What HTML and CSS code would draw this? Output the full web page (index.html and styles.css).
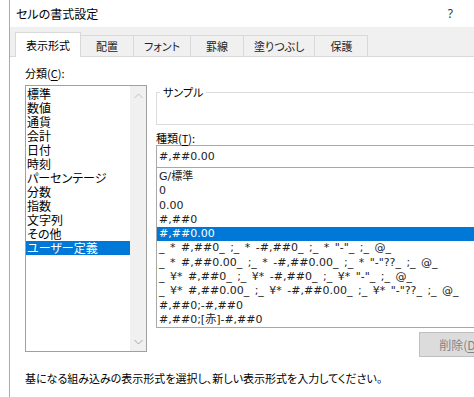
FILE: index.html
```html
<!DOCTYPE html>
<html lang="ja">
<head>
    <meta charset="UTF-8">
    <meta name="viewport" content="width=device-width, initial-scale=1.0">
    <title>セルの書式設定</title>
    <link rel="stylesheet" href="styles.css">
</head>
<body>
    <div class="window">
        <div class="titlebar">
            <span class="title">セルの書式設定</span>
            <span class="help">?</span>
        </div>

        <div class="tabs">
            <div class="tab active">表示形式</div>
            <div class="tab">配置</div>
            <div class="tab">フォント</div>
            <div class="tab">罫線</div>
            <div class="tab">塗りつぶし</div>
            <div class="tab">保護</div>
        </div>

        <div class="panel">
            <div class="columns">
                <div class="left">
                    <div class="label">分類(<u>C</u>):</div>
                    <div class="category-list">
                        <ul class="items">
                            <li>標準</li>
                            <li>数値</li>
                            <li>通貨</li>
                            <li>会計</li>
                            <li>日付</li>
                            <li>時刻</li>
                            <li>パーセンテージ</li>
                            <li>分数</li>
                            <li>指数</li>
                            <li>文字列</li>
                            <li>その他</li>
                            <li class="selected">ユーザー定義</li>
                        </ul>
                        <div class="scrollbar">
                            <svg class="arrow up" width="9" height="6" viewBox="0 0 9 6"><polyline points="0.5,5 4.5,1 8.5,5" fill="none" stroke="#c2c2c2" stroke-width="1"/></svg>
                            <svg class="arrow down" width="9" height="6" viewBox="0 0 9 6"><polyline points="0.5,1 4.5,5 8.5,1" fill="none" stroke="#a6a6a6" stroke-width="1"/></svg>
                        </div>
                    </div>
                </div>

                <div class="right">
                    <fieldset class="sample">
                        <legend>サンプル</legend>
                        <div class="sample-body"></div>
                    </fieldset>
                    <div class="label type-label">種類(<u>T</u>):</div>
                    <div class="type-input">#,##0.00</div>
                    <ul class="format-list">
                        <li>G/標準</li>
                        <li>0</li>
                        <li>0.00</li>
                        <li>#,##0</li>
                        <li class="selected">#,##0.00</li>
                        <li>_ * #,##0_ ;_ * -#,##0_ ;_ * "-"_ ;_ @_</li>
                        <li>_ * #,##0.00_ ;_ * -#,##0.00_ ;_ * "-"??_ ;_ @_</li>
                        <li>_ ¥* #,##0_ ;_ ¥* -#,##0_ ;_ ¥* "-"_ ;_ @_</li>
                        <li>_ ¥* #,##0.00_ ;_ ¥* -#,##0.00_ ;_ ¥* "-"??_ ;_ @_</li>
                        <li>#,##0;-#,##0</li>
                        <li>#,##0;[赤]-#,##0</li>
                    </ul>
                    <div class="actions">
                        <button class="delete" disabled>削除(<u>D</u>)</button>
                    </div>
                </div>
            </div>

            <p class="hint">基になる組み込みの表示形式を選択し、新しい表示形式を入力してください。</p>
        </div>
    </div>
</body>
</html>
```

FILE: styles.css
```css
        html, body {
            margin: 0;
            padding: 0;
            background: #fff;
            overflow: hidden;
        }
        body {
            font-family: "Noto Sans CJK JP", sans-serif;
            font-size: 11px;
            font-feature-settings: "palt";
            color: #000;
        }
        .window {
            width: 515px;
            height: 397px;
            margin-left: 9px;
            border-left: 1px solid #7eb4ea;
            background: #fff;
        }
        .titlebar {
            height: 27px;
            display: flex;
            align-items: center;
            padding: 0 72px 0 6px;
            font-size: 12px;
        }
        .help {
            margin-left: auto;
            font-family: "Noto Sans", sans-serif;
            font-size: 12px;
            color: #333;
        }

        /* タブ */
        .tabs {
            height: 30px;
            box-sizing: border-box;
            display: flex;
            align-items: flex-end;
            padding-left: 5px;
            background: #f0f0f0;
            border-bottom: 1px solid #d9d9d9;
        }
        .tab {
            height: 21px;
            min-width: 54px;
            box-sizing: border-box;
            padding: 0 10px;
            display: flex;
            align-items: center;
            justify-content: center;
            border: 1px solid #d9d9d9;
            border-bottom: none;
            margin-left: -1px;
            background: #f0f0f0;
            color: #222;
        }
        .tab.active {
            height: 25px;
            margin-bottom: -1px;
            background: #fff;
            color: #000;
            margin-left: 0;
        }

        .panel {
            padding: 9px 15px 0 15px;
        }
        .columns {
            display: flex;
            gap: 9px;
        }
        .label {
            line-height: 14px;
            height: 14px;
        }
        u {
            text-decoration-thickness: 1px;
            text-underline-offset: 2px;
        }

        /* 分類リスト */
        .left {
            width: 122px;
        }
        .category-list {
            margin-top: 5px;
            height: 267px;
            box-sizing: border-box;
            border: 1px solid #a0a0a0;
            display: flex;
        }
        .items {
            list-style: none;
            margin: 0;
            padding: 1px 0 0 0;
            flex: 1;
            font-size: 12px;
        }
        .items li {
            height: 14px;
            line-height: 14px;
            padding-left: 1px;
            white-space: nowrap;
        }
        .items li.selected,
        .format-list li.selected {
            background: #0078d7;
            color: #fff;
        }
        .scrollbar {
            width: 16px;
            background: #f0f0f0;
            display: flex;
            flex-direction: column;
            justify-content: space-between;
            align-items: center;
            padding: 7px 0 6px 0;
        }

        /* 右側 */
        .right {
            width: 344px;
            padding-top: 20px;
        }
        .sample {
            margin: 0;
            padding: 0;
            border: 1px solid #dcdcdc;
        }
        .sample legend {
            margin-left: 3px;
            padding: 0 3px;
            line-height: 12px;
            font-size: 11px;
        }
        .sample-body {
            height: 26px;
        }
        .type-label {
            margin-top: 6px;
        }
        .type-input {
            height: 23px;
            box-sizing: border-box;
            border: 1px solid #a8a8a8;
            padding-left: 2px;
            line-height: 21px;
            font-family: "DejaVu Sans", "Noto Sans CJK JP", sans-serif;
            font-size: 11px;
            color: #222;
        }
        .format-list {
            list-style: none;
            margin: 0;
            padding: 2px 0 0 0;
            height: 160px;
            box-sizing: border-box;
            border: 1px solid #a8a8a8;
            border-top: none;
            font-family: "DejaVu Sans", "Noto Sans CJK JP", sans-serif;
            font-size: 11px;
            color: #222;
        }
        .format-list li {
            height: 14.3px;
            line-height: 14.3px;
            padding-left: 2px;
            white-space: pre;
            word-spacing: 2px;
        }
        .actions {
            display: flex;
            justify-content: flex-end;
            margin-top: 4px;
        }
        .delete {
            width: 81px;
            height: 25px;
            border: 1px solid #bfbfbf;
            background: #dcdcdc;
            color: #838383;
            font-family: "Noto Sans CJK JP", sans-serif;
            font-size: 12px;
            font-feature-settings: "palt";
            padding: 0;
        }
        .hint {
            margin: 14px 0 0 0;
            line-height: 14px;
            font-size: 11px;
        }
```
